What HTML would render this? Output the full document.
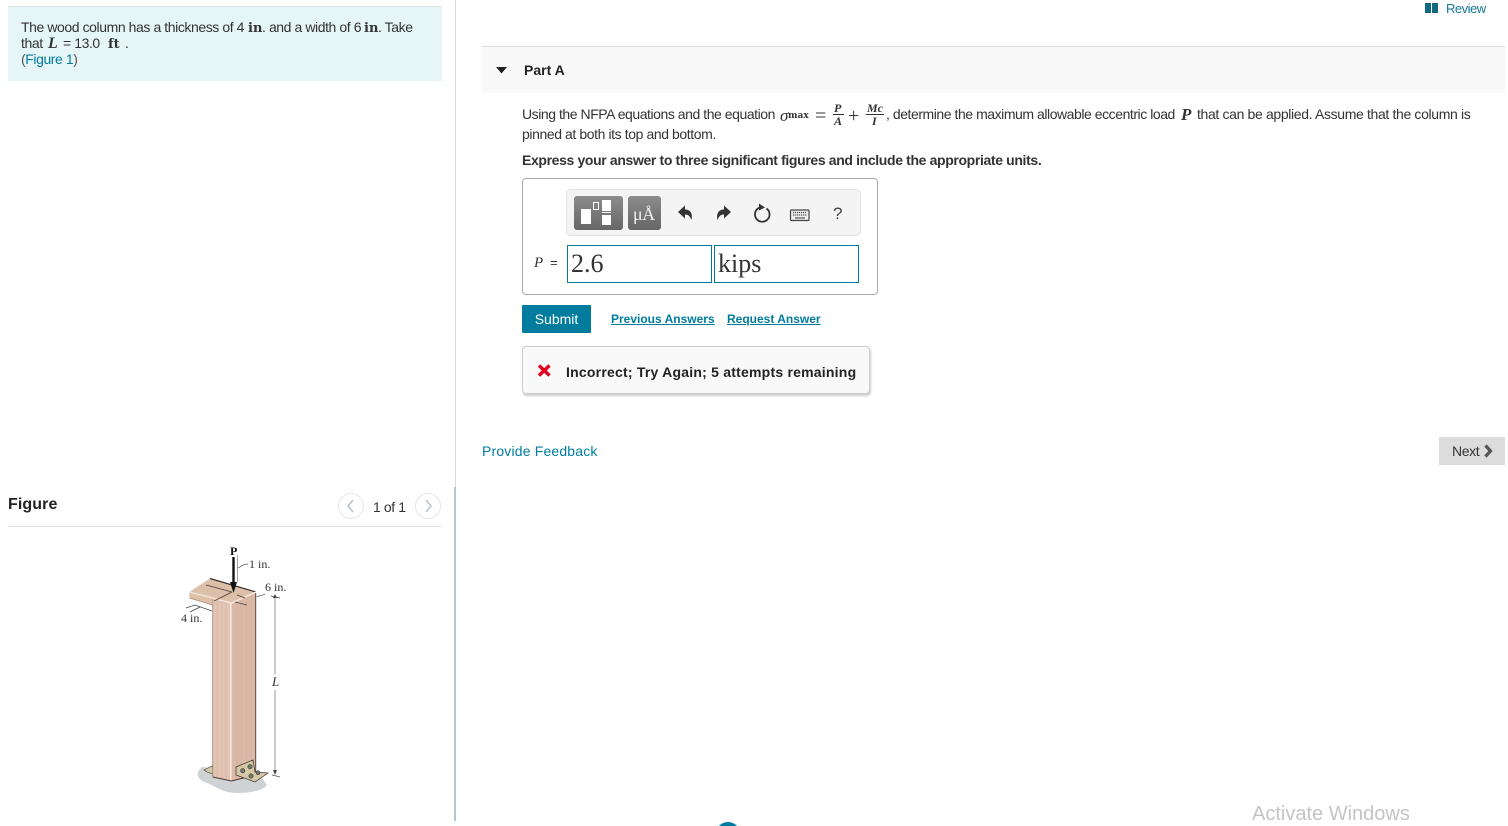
<!DOCTYPE html>
<html><head><meta charset="utf-8"><style>
html,body{margin:0;padding:0;background:#fff;width:1508px;height:826px;overflow:hidden}
body{position:relative;font-family:"Liberation Sans",sans-serif;font-size:14px;color:#333}
.a{position:absolute;white-space:nowrap}
.t{line-height:16px;letter-spacing:-.42px}
.m{font-family:"Liberation Serif",serif}
.b{font-family:"DejaVu Serif","Liberation Serif",serif}
.z{z-index:2}
.l{font-weight:bold;font-size:12px;text-decoration:underline;color:#007c9f}
</style></head><body>
<div class="a" style="left:8px;top:6px;width:434px;height:74px;background:#e6f6f7;border-top:1px solid #dde3e6"></div>
<div class="a t" style="left:21px;top:19px">The wood column has a thickness of 4</div>
<div class="a b" style="left:248px;top:21px;font-size:13px;line-height:16px;font-weight:bold">in</div>
<div class="a t" style="left:262px;top:19px">. and a width of 6</div>
<div class="a b" style="left:364px;top:21px;font-size:13px;line-height:16px;font-weight:bold">in</div>
<div class="a t" style="left:378px;top:19px">. Take</div>
<div class="a t" style="left:21px;top:35px">that</div>
<div class="a m" style="left:48px;top:36px;font-size:16px;line-height:16px;font-style:italic;font-weight:bold">L</div>
<div class="a t" style="left:63px;top:35px">= 13.0</div>
<div class="a b" style="left:108px;top:37px;font-size:13px;line-height:16px;font-weight:bold">ft</div>
<div class="a t" style="left:125px;top:35px">.</div>
<div class="a t" style="left:21px;top:51px;color:#555">(<span style="color:#007c9f">Figure 1</span>)</div>
<div class="a" style="left:455px;top:0;width:1px;height:487px;background:#d8dadc"></div>
<div class="a" style="left:454px;top:487px;width:2px;height:334px;background:#b8c6d2"></div>

<div class="a" style="left:8px;top:495px;font-weight:bold;font-size:16px;line-height:19px;color:#222;letter-spacing:.1px">Figure</div>
<div class="a" style="left:338px;top:493px;width:24px;height:24px;border:1px solid #e6e6e6;border-radius:50%"></div>
<div class="a" style="left:415px;top:493px;width:24px;height:24px;border:1px solid #e6e6e6;border-radius:50%"></div>
<div class="a" style="left:373px;top:499px;font-size:14px;letter-spacing:-.4px">1 of 1</div>
<div class="a" style="left:8px;top:526px;width:433px;height:1px;background:#dcdcdc"></div>

<div class="a" style="left:482px;top:46px;width:1023px;height:46px;background:#f9f9f9;border-top:1px solid #dedede"></div>
<div class="a" style="left:522px;top:178px;width:354px;height:115px;border:1px solid #aaa;border-radius:4px"></div>
<div class="a" style="left:566px;top:189px;width:293px;height:45px;background:#f4f4f4;border:1px solid #e2e2e2;border-radius:5px"></div>
<div class="a" style="left:574px;top:196px;width:49px;height:34px;background:linear-gradient(#8c8c8c,#666);border-radius:3px"></div>
<div class="a" style="left:581px;top:209px;width:10px;height:15px;background:#fff"></div>
<div class="a" style="left:593px;top:202px;width:4px;height:6px;border:1px solid #fff"></div>
<div class="a" style="left:602px;top:200px;width:9px;height:11px;background:#fff"></div>
<div class="a" style="left:602px;top:212px;width:9px;height:1px;background:#fff"></div>
<div class="a" style="left:602px;top:215px;width:9px;height:10px;background:#fff"></div>
<div class="a" style="left:628px;top:196px;width:33px;height:34px;background:linear-gradient(#8c8c8c,#666);border-radius:3px"></div>
<div class="a" style="left:522px;top:346px;width:346px;height:46px;background:#f9f9f9;border:1px solid #ccc;border-radius:4px;box-shadow:1px 2px 2px #ccc"></div>
<div class="a" style="left:1439px;top:437px;width:66px;height:28px;background:#dcdcdc"></div>

<svg class="a" style="left:0;top:0;z-index:1" width="1508" height="826" viewBox="0 0 1508 826">
<path d="M353 500L348 506 353 512" fill="none" stroke="#b9c2cc" stroke-width="1.600"/>
<path d="M426 500L431 506 426 512" fill="none" stroke="#b9c2cc" stroke-width="1.600"/>
<!-- shadow -->
<path d="M202 767C196 772 196 778 204 782 214 785 222 793 236 793 252 793 264 790 267 785L258 772 214 768Z" fill="#d0d3d5"/>
<path d="M204 770L212 766 213 768 213 774 207 772Z" fill="#d6c7a5" stroke="#333" stroke-width=".6"/>
<!-- column -->
<path d="M212.700 598L231.500 603 231.500 781 212.700 777Z" fill="#e2c4b3"/>
<path d="M231.500 603L255.700 593 255.700 775 231.500 781Z" fill="#dcb9a7"/>
<path d="M217 600V777M222 601V778M226 602V779M237 602V778M241 600V778M246 598V777M251 596V776" stroke="#cfaa98" stroke-width=".8" opacity=".6"/>
<path d="M230.800 603V781" stroke="#f7e6dc" stroke-width="1.600"/>
<path d="M212.700 777L231.500 781 255.700 775" fill="none" stroke="#4a3a34" stroke-width="1"/>
<path d="M255.700 593V775" stroke="#5a4a44" stroke-width="1"/>
<path d="M212.700 598V777" stroke="#9b8274" stroke-width=".8"/>
<!-- cap -->
<path d="M189.300 592L210 578.500 256 592 231.500 603 212.700 598 212.700 605 189.300 598Z" fill="#dcc0a9"/>
<path d="M210 578.500L256 592" stroke="#3a2e2a" stroke-width="1.200"/>
<path d="M189.300 592L212.700 598 231.500 603 256 592" fill="none" stroke="#f5e8dc" stroke-width="1.400"/>
<path d="M206 585L232 592M232 592L214 601M237 595L245 598" stroke="#4a3a34" stroke-width=".8"/>
<path d="M189.300 598L212.700 605" stroke="#a98a76" stroke-width=".8"/>
<!-- load -->
<path d="M233.500 557V584" stroke="#111" stroke-width="2.400"/>
<path d="M230 582H237L233.500 593Z" fill="#111"/>
<path d="M237.500 555V582" stroke="#aaa" stroke-width="1"/>
<path d="M237.500 568C241 568 241 564 248 564" fill="none" stroke="#555" stroke-width=".7"/>
<!-- dims -->
<path d="M256.700 596.700L265 594.300M271 596L280 598M235 602L247 605" fill="none" stroke="#444" stroke-width=".7"/>
<path d="M275 598V772" stroke="#aaa" stroke-width="1.200"/>
<path d="M273 598H277L275 594Z" fill="#444"/>
<path d="M273 770H277L275 775Z" fill="#444"/>
<path d="M272 775L280 777" stroke="#555" stroke-width=".7"/>
<path d="M186 608L195 605 212 611M200 607L190 612" fill="none" stroke="#444" stroke-width=".7"/>
<rect x="268" y="674" width="14" height="16" fill="#fff"/>
<!-- bracket -->
<path d="M236 767L253 760 255 772 268 773 255 782 236 775Z" fill="#d6c7a5" stroke="#3b332c" stroke-width=".7"/>
<circle cx="242.700" cy="770.700" r="2.200" fill="#6f7a72" stroke="#222" stroke-width=".5"/>
<circle cx="250" cy="766.700" r="2.200" fill="#6f7a72" stroke="#222" stroke-width=".5"/>
<circle cx="251" cy="776" r="2.200" fill="#6f7a72" stroke="#222" stroke-width=".5"/>
<circle cx="258" cy="772.700" r="2" fill="#6f7a72" stroke="#222" stroke-width=".5"/>
<!-- toolbar icons -->
<path d="M678 212L685 205.500V209.500C690 209.500 693 213 691.500 220 690 216 688 214.500 685 214.500V218.500Z" fill="#333"/>
<path d="M731 212L724 205.500V209.500C719 209.500 716 213 717.500 220 719 216 721 214.500 724 214.500V218.500Z" fill="#333"/>
<path d="M760 207.500A7.300 7.300 0 1 0 766.500 208.500" fill="none" stroke="#333" stroke-width="1.800"/>
<path d="M759 203.500L765 207.500 759 210.500Z" fill="#333"/>
<rect x="790.500" y="210" width="18.500" height="10.500" rx="1" fill="#eee" stroke="#444" stroke-width="1.200"/>
<path d="M793 212.500H807M793 215H807" stroke="#555" stroke-width="1.200" stroke-dasharray="1.200 .8"/>
<path d="M795 218H805" stroke="#555" stroke-width="1.200"/>
<!-- x -->
<path d="M539 365.500L549.500 375.500M549.500 365.500L539 375.500" stroke="#e3001b" stroke-width="3.400"/>
<!-- review -->
<path d="M1425 3H1431V13H1425ZM1432 3H1438V13H1432Z" fill="#14697f"/>
<path d="M1485.500 445.500L1490.500 451 1485.500 456.500" fill="none" stroke="#555" stroke-width="3.200"/>
<path d="M496 67H507L501.500 73.500Z" fill="#222"/>
</svg>
<div class="a m z" style="left:230px;top:544px;font-size:12px;font-weight:bold;color:#111">P</div>
<div class="a m z" style="left:249px;top:557px;font-size:12px">1 in.</div>
<div class="a m z" style="left:265px;top:580px;font-size:12px">6 in.</div>
<div class="a m z" style="left:181px;top:611px;font-size:12px">4 in.</div>
<div class="a m z" style="left:272px;top:674px;font-size:13px;font-style:italic">L</div>

<div class="a" style="left:1446px;top:1px;font-size:13px;letter-spacing:-.5px;color:#14789a">Review</div>
<div class="a" style="left:524px;top:62px;font-weight:bold;font-size:14px;color:#222">Part A</div>

<div class="a" style="left:522px;top:106px;letter-spacing:-.45px">Using the NFPA equations and the equation</div>
<div class="a m" style="left:780px;top:106px;font-size:17px;font-style:italic">σ</div>
<div class="a b" style="left:788px;top:111px;font-weight:bold;font-size:9px">max</div>
<div class="a m" style="left:815px;top:105px;font-size:20px">=</div>
<div class="a m" style="left:834px;top:101px;font-size:12px;font-style:italic;font-weight:bold">P</div>
<div class="a m" style="left:834px;top:114px;font-size:12px;font-style:italic;font-weight:bold">A</div>
<div class="a" style="left:833px;top:114px;width:11px;height:1px;background:#333"></div>
<div class="a m" style="left:848px;top:105px;font-size:20px">+</div>
<div class="a m" style="left:867px;top:101px;font-size:12px;font-style:italic;font-weight:bold">Mc</div>
<div class="a m" style="left:872px;top:114px;font-size:12px;font-style:italic;font-weight:bold">I</div>
<div class="a" style="left:866px;top:114px;width:18px;height:1px;background:#333"></div>
<div class="a" style="left:886px;top:106px;letter-spacing:-.45px">, determine the maximum allowable eccentric load</div>
<div class="a m" style="left:1181px;top:105px;font-size:17px;font-style:italic;font-weight:bold">P</div>
<div class="a" style="left:1197px;top:106px;letter-spacing:-.35px">that can be applied. Assume that the column is</div>
<div class="a" style="left:522px;top:126px;letter-spacing:-.41px">pinned at both its top and bottom.</div>
<div class="a" style="left:522px;top:152px;font-weight:bold;letter-spacing:-.36px">Express your answer to three significant figures and include the appropriate units.</div>

<div class="a m z" style="left:633px;top:204px;font-size:18px;color:#f1f1f1;letter-spacing:-.5px">μÅ</div>
<div class="a z" style="left:833px;top:204px;font-size:17px;color:#444">?</div>

<div class="a m" style="left:534px;top:255px;font-size:15px;font-style:italic">P</div>
<div class="a" style="left:550px;top:255px;font-size:13px">=</div>
<div class="a m" style="left:567px;top:245px;width:140px;height:36px;border:1px solid #007c9f;font-size:26px;line-height:36px;padding-left:3px">2.6</div>
<div class="a m" style="left:714px;top:245px;width:140px;height:36px;border:1px solid #007c9f;font-size:26px;line-height:36px;padding-left:3px">kips</div>

<div class="a" style="left:522px;top:305px;width:69px;height:28px;background:#007c9f;border-radius:1px;color:#fff;text-align:center;line-height:28px;font-size:14px">Submit</div>
<div class="a l" style="left:611px;top:312px">Previous Answers</div>
<div class="a l" style="left:727px;top:312px">Request Answer</div>

<div class="a z" style="left:566px;top:364px;font-weight:bold;font-size:14px;color:#222;letter-spacing:.22px">Incorrect; Try Again; 5 attempts remaining</div>

<div class="a" style="left:482px;top:443px;font-size:14px;color:#007c9f;letter-spacing:.17px">Provide Feedback</div>
<div class="a z" style="left:1452px;top:443px;font-size:14px;letter-spacing:-.4px">Next</div>

<div class="a" style="left:710px;top:822px;width:40px;height:4px;overflow:hidden"><div class="a" style="left:6px;top:0;width:24px;height:24px;border-radius:50%;background:#007c9f"></div></div>
<div class="a" style="left:1252px;top:803px;font-size:20px;color:#c4c4c4">Activate Windows</div>
</body></html>
